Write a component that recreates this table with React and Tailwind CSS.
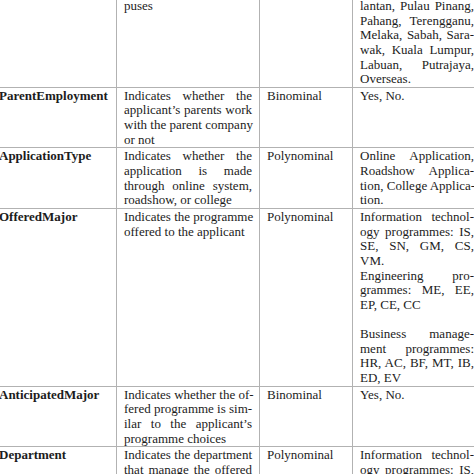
const rows = [
  {
    name: "",
    desc: ["puses"],
    type: "",
    values: [
      "lantan, Pulau Pinang,",
      "Pahang, Terengganu,",
      "Melaka, Sabah, Sara-",
      "wak, Kuala Lumpur,",
      "Labuan, Putrajaya,",
      "Overseas.",
    ],
  },
  {
    name: "ParentEmployment",
    desc: ["Indicates whether the", "applicant’s parents work", "with the parent company", "or not"],
    type: "Binominal",
    values: ["Yes, No."],
  },
  {
    name: "ApplicationType",
    desc: ["Indicates whether the", "application is made", "through online system,", "roadshow, or college"],
    type: "Polynominal",
    values: ["Online Application,", "Roadshow Applica-", "tion, College Applica-", "tion."],
  },
  {
    name: "OfferedMajor",
    desc: ["Indicates the programme", "offered to the applicant"],
    type: "Polynominal",
    values: [
      "Information technol-",
      "ogy programmes: IS,",
      "SE, SN, GM, CS,",
      "VM.",
      "Engineering pro-",
      "grammes: ME, EE,",
      "EP, CE, CC",
      "",
      "Business manage-",
      "ment programmes:",
      "HR, AC, BF, MT, IB,",
      "ED, EV",
    ],
  },
  {
    name: "AnticipatedMajor",
    desc: ["Indicates whether the of-", "fered programme is sim-", "ilar to the applicant’s", "programme choices"],
    type: "Binominal",
    values: ["Yes, No."],
  },
  {
    name: "Department",
    desc: ["Indicates the department", "that manage the offered"],
    type: "Polynominal",
    values: ["Information technol-", "ogy programmes: IS,"],
  },
];

// last lines of a paragraph are left aligned, the others justified
const lastLines = new Set(["puses", "Overseas.", "or not", "Yes, No.", "tion.", "roadshow, or college",
  "offered to the applicant", "VM.", "EP, CE, CC", "ED, EV", "programme choices", ""]);

function Lines({ items }) {
  return items.map((t, i) => (
    <div
      key={i}
      className={`h-[14.65px] whitespace-nowrap ${lastLines.has(t) ? "text-left" : "text-justify [text-align-last:justify]"}`}
    >
      {t}
    </div>
  ));
}

export default function App() {
  return (
    <div className="h-[474px] w-[474px] overflow-hidden bg-white">
      <div className="-ml-[8px] -mt-[2px] w-[489px] font-['Liberation_Serif',serif] text-[13px] leading-[14.65px] text-[#1c1c1c]">
        {rows.map((r, i) => (
          <div key={i} className="grid grid-cols-[125px_143px_93px_128px] border-b border-[#b2b2b2]">
            <div className="border-r border-[#b2b2b2] px-[7px] pt-px font-bold">{r.name}</div>
            <div className="border-r border-[#b2b2b2] px-[7px] pt-px">
              <Lines items={r.desc} />
            </div>
            <div className="border-r border-[#b2b2b2] px-[7px] pt-px">{r.type}</div>
            <div className="px-[7px] pt-px">
              <Lines items={r.values} />
            </div>
          </div>
        ))}
      </div>
    </div>
  );
}
